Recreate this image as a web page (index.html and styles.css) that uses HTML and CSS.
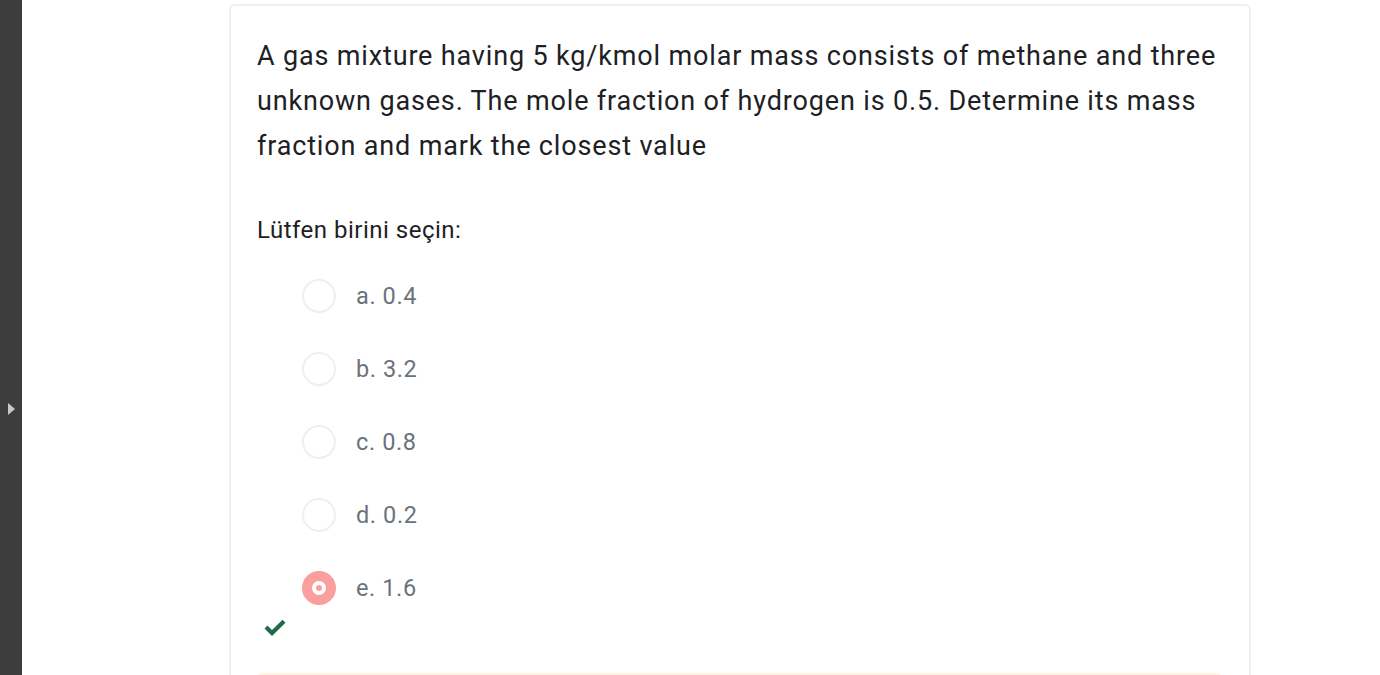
FILE: index.html
```html
<!DOCTYPE html>
<html>
<head>
<meta charset="utf-8">
<link rel="stylesheet" href="styles.css">
</head>
<body>
<div class="page">
  <aside class="sidebar"><span class="toggle"></span></aside>
  <main class="main">
    <section class="card">
      <p class="qtext">A gas mixture having 5 kg/kmol molar mass consists of methane and three unknown gases. The mole fraction of hydrogen is 0.5. Determine its mass fraction and mark the closest value</p>
      <div class="prompt">Lütfen birini seçin:</div>
      <div class="answers">
        <div class="opt"><span class="radio"></span><span class="label">a. 0.4</span></div>
        <div class="opt"><span class="radio"></span><span class="label">b. 3.2</span></div>
        <div class="opt"><span class="radio"></span><span class="label">c. 0.8</span></div>
        <div class="opt"><span class="radio"></span><span class="label">d. 0.2</span></div>
        <div class="opt"><span class="radio checked"><span class="dot"></span></span><span class="label">e. 1.6</span></div>
      </div>
      <div class="check">
        <svg width="24" height="18" viewBox="0 0 24 18"><path d="M1.5 9.5 L4.5 6.5 L9 11 L19.5 0.8 L22.5 3.8 L9 17 Z" fill="#1f6b4a"/></svg>
      </div>
      <div class="feedback"></div>
    </section>
  </main>
</div>
</body>
</html>
```
FILE: styles.css
```css
html, body {
  margin: 0;
  padding: 0;
  background: #ffffff;
  font-family: Roboto, "Liberation Sans", sans-serif;
  overflow: hidden;
}
.page {
  display: flex;
  height: 675px;
}
.sidebar {
  width: 22px;
  flex: none;
  background: #3d3d3d;
  padding-top: 403px;
  box-sizing: border-box;
}
.toggle {
  display: block;
  margin-left: 8px;
  width: 0;
  height: 0;
  border-top: 6px solid transparent;
  border-bottom: 6px solid transparent;
  border-left: 7px solid #c9c9c9;
}
.main {
  flex: 1;
  padding-left: 207px;
  padding-top: 4px;
}
.card {
  width: 965px;
  border: 2px solid #eff1f1;
  border-radius: 5px;
  padding: 28px 27px 0 26px;
  height: 700px;
}
.qtext {
  margin: 0;
  font-size: 27px;
  line-height: 45px;
  color: #1d2125;
  letter-spacing: 0.84px;
}
.prompt {
  margin-top: 45px;
  font-size: 24px;
  line-height: 33px;
  letter-spacing: 0.5px;
  color: #1d2125;
}
.answers {
  margin-top: 12px;
}
.opt {
  height: 73px;
  display: flex;
  align-items: center;
  padding-left: 45px;
}
.radio {
  width: 30px;
  height: 30px;
  border: 2px solid #eef0ef;
  border-radius: 50%;
  flex: none;
  display: flex;
  align-items: center;
  justify-content: center;
}
.radio.checked {
  background: #fa9f9d;
  border-color: #fa9f9d;
}
.dot {
  width: 6px;
  height: 6px;
  border-radius: 50%;
  background: #fa9f9d;
  border: 4px solid #ffffff;
}
.label {
  margin-left: 20px;
  font-size: 23.5px;
  letter-spacing: 0.6px;
  color: #6a737b;
}
.check {
  margin-top: -5px;
  padding-left: 6px;
  height: 20px;
}
.check svg {
  display: block;
}
.feedback {
  margin-top: 34px;
  height: 60px;
  background: #fef4e8;
  border-radius: 5px;
}
```
